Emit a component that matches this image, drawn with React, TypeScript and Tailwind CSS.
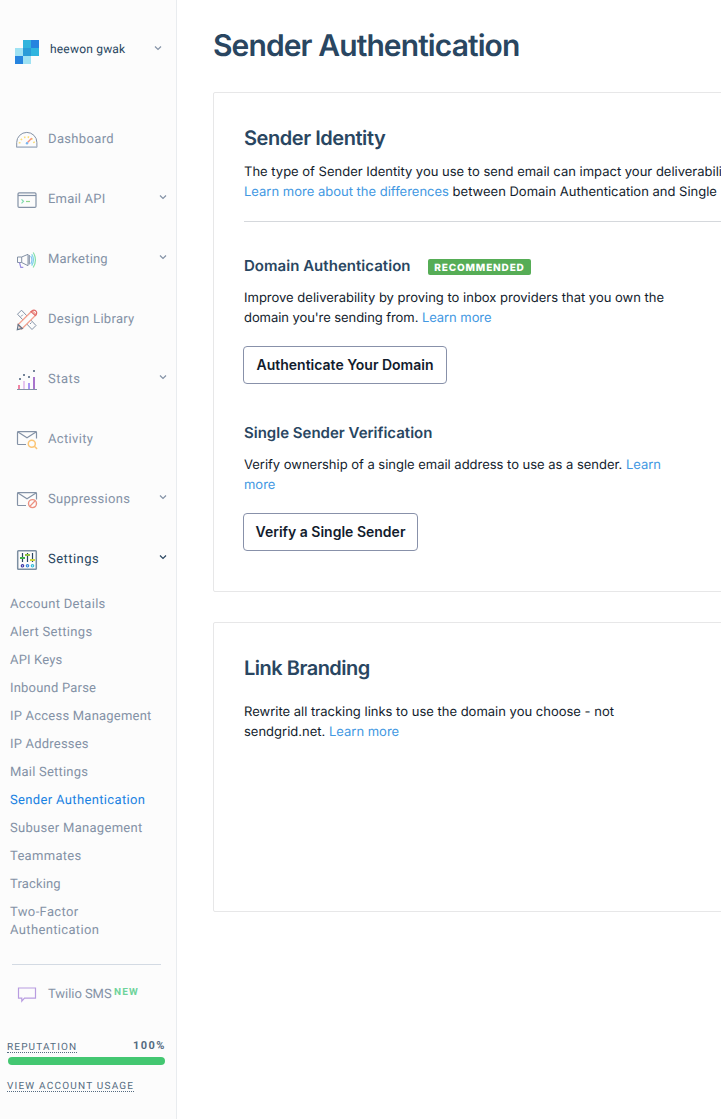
import React from 'react';
import { clsx } from 'clsx';

interface NavItem {
  label: string;
  icon: React.ReactNode;
  spacing: string;
  expandable?: boolean;
  active?: boolean;
}

const INK = '#8492a6';

const Logo = () => (
  <svg width="24" height="24" viewBox="0 0 24 24" shapeRendering="crispEdges">
    <path d="M8 0h8v8H8z" fill="#31b4dd" />
    <path d="M16 0h8v8h-8z" fill="#2684df" />
    <path d="M0 8h8v8H0z" fill="#9fe2f3" />
    <path d="M8 8h8v8H8z" fill="#2a9cd8" />
    <path d="M16 8h8v8h-8z" fill="#30b5df" />
    <path d="M0 16h8v8H0z" fill="#2684df" />
    <path d="M8 16h8v8H8z" fill="#9fe2f3" />
  </svg>
);

const Chevron = ({ className }: { className?: string }) => (
  <svg className={className} width="8" height="6" viewBox="0 0 8 6" fill="none" stroke="currentColor" strokeWidth="1.2">
    <path d="M1 1.5l3 3 3-3" />
  </svg>
);

const Icon = ({ children }: { children: React.ReactNode }) => (
  <svg className="shrink-0" width="22" height="22" viewBox="0 0 22 22" fill="none" stroke={INK} strokeWidth="1">
    {children}
  </svg>
);

const DashboardIcon = () => (
  <Icon>
    <path d="M.7 18.3V13.5a10.1 10.1 0 0 1 20.2 0v4.8z" />
    <path d="M1 18.2h19.8" stroke="#b4bfce" strokeWidth="1.6" />
    <path d="M3.5 14.5a7.4 7.4 0 0 1 14.7 0" stroke="#fbdc78" strokeWidth="1.8" strokeDasharray="1.5 2.3" />
    <path d="M11.5 13.5l4.2-4.2" stroke="#f5917f" strokeWidth="1.4" />
    <circle cx="11" cy="14.2" r="1.2" fill="#7ab5f0" stroke="none" />
  </Icon>
);

const EmailApiIcon = () => (
  <Icon>
    <rect x="2" y="3.8" width="18" height="14.6" rx="1.2" strokeWidth="1.2" />
    <path d="M2 6.5h18" strokeWidth="1.2" />
    <path d="M5.5 10.3l2 2-2 2" stroke="#7fdcae" strokeWidth="1.2" />
    <path d="M10 12.5h4" stroke="#8fd78b" strokeWidth="1.2" />
  </Icon>
);

const MarketingIcon = () => (
  <Icon>
    <path d="M1.5 8h4.2v5.5H1.5z M5.7 8l6.3-2.7v11.4L5.7 13.5" />
    <path d="M13.2 6v9.5" strokeWidth="1.3" />
    <path d="M3.5 13.5l1.3 4.8h2.5" stroke="#9a8fe0" strokeWidth="1.2" />
    <path d="M14.7 7q2.5 4 0 8" stroke="#85bff2" strokeWidth="1.2" />
    <path d="M15.7 5.2q3.6 5.6 0 11.4" stroke="#7fd6e8" strokeWidth="1.2" />
    <path d="M17.2 3.5q4.5 7.5 0 15" stroke="#85dfa8" strokeWidth="1.2" />
  </Icon>
);

const DesignIcon = () => (
  <Icon>
    <path d="M1.5 5.2l4-4L20 16.5l-4 4z" />
    <path d="M5 7.5l1.8-1.8M9 11.8l1.8-1.8M14 15l1.5-1.5" />
    <path d="M2 15.7L16.2 1.7l4 4L5.7 20z" fill="#fcfcfc" stroke="#f4a08e" strokeWidth="1.2" />
    <path d="M15.8 2.2q2-1.8 3.8-.4t.6 3.8l-1 .9-4.2-3.8z" stroke="#e06969" strokeWidth="1.2" />
    <path d="M2.2 15.5L1.3 20.7l5-1.3z" stroke="#66778b" strokeWidth="1.2" />
  </Icon>
);

const StatsIcon = () => (
  <Icon>
    <path d="M1 20.5h20" />
    <path d="M3 16v4" stroke="#f285a5" strokeWidth="2" />
    <path d="M8 12v8" stroke="#e6c6ee" strokeWidth="2" />
    <path d="M13 14v6" stroke="#a996f5" strokeWidth="2" />
    <path d="M18 8v12" stroke="#a874cc" strokeWidth="2" />
    <path d="M3 9h2v2H3zM7 5h2v2H7zM12 7h2v2h-2zM17 1h2v2h-2z" fill="#75859a" stroke="none" />
  </Icon>
);

const Envelope = () => (
  <>
    <path d="M10 15.5H2.3q-.8 0-.8-.8V3.5q0-.8.8-.8h17.4q.8 0 .8.8V9.5" strokeWidth="1.2" />
    <path d="M2 3l9 5.7L20 3" strokeWidth="1.2" />
  </>
);

const ActivityIcon = () => (
  <Icon>
    <Envelope />
    <circle cx="15.8" cy="14.8" r="3.5" stroke="#fbc575" strokeWidth="1.5" />
    <path d="M18.3 17.3l2.8 2.6" stroke="#fbc575" strokeWidth="1.5" />
  </Icon>
);

const SuppressionsIcon = () => (
  <Icon>
    <g transform="translate(0 1)">
      <Envelope />
    </g>
    <circle cx="16.5" cy="14.6" r="4" stroke="#ec9080" strokeWidth="1.4" />
    <path d="M13.8 17.4l5.4-5.6" stroke="#ec9080" strokeWidth="1.3" />
  </Icon>
);

const SettingsIcon = () => (
  <Icon>
    <rect x="1.7" y="1.7" width="18.6" height="18.6" rx=".8" stroke="#7c8fa2" strokeWidth="1.5" />
    <path d="M6.5 4v9M11.5 4v9M16.5 4v9" stroke="#294661" strokeWidth="1.2" />
    <path d="M4 9h5" stroke="#3fae4c" strokeWidth="2" />
    <path d="M9 6h5" stroke="#8fc043" strokeWidth="2" />
    <path d="M14 11h5" stroke="#cdd73f" strokeWidth="2" />
    <circle cx="6.5" cy="16.8" r="1.2" stroke="#4038a8" strokeWidth="1.2" />
    <circle cx="11.5" cy="16.8" r="1.2" stroke="#3487dd" strokeWidth="1.2" />
    <circle cx="16.5" cy="16.8" r="1.2" stroke="#36bedb" strokeWidth="1.2" />
  </Icon>
);

const SmsIcon = () => (
  <Icon>
    <path d="M2.5 5h17v10.2H8.5l-2.7 3v-3H2.5z" stroke="#b89ce0" strokeWidth="1.2" />
  </Icon>
);

const navItems: NavItem[] = [
  { label: 'Dashboard', icon: <DashboardIcon />, spacing: 'tracking-[0.35px]' },
  { label: 'Email API', icon: <EmailApiIcon />, spacing: 'tracking-[0.2px]', expandable: true },
  { label: 'Marketing', icon: <MarketingIcon />, spacing: 'tracking-[0.2px]', expandable: true },
  { label: 'Design Library', icon: <DesignIcon />, spacing: 'tracking-[0.3px]' },
  { label: 'Stats', icon: <StatsIcon />, spacing: 'tracking-[0.5px]', expandable: true },
  { label: 'Activity', icon: <ActivityIcon />, spacing: 'tracking-[0.35px]' },
  { label: 'Suppressions', icon: <SuppressionsIcon />, spacing: 'tracking-[0.3px]', expandable: true },
  { label: 'Settings', icon: <SettingsIcon />, spacing: 'tracking-[0.45px]', expandable: true, active: true },
];

const settingsLinks = [
  { label: 'Account Details', spacing: 'tracking-[0.3px]' },
  { label: 'Alert Settings', spacing: 'tracking-[0.3px]' },
  { label: 'API Keys', spacing: 'tracking-[0.15px]' },
  { label: 'Inbound Parse', spacing: 'tracking-[0.2px]' },
  { label: 'IP Access Management', spacing: 'tracking-[0.22px]' },
  { label: 'IP Addresses', spacing: 'tracking-[0.2px]' },
  { label: 'Mail Settings', spacing: 'tracking-[0.2px]' },
  { label: 'Sender Authentication', spacing: 'tracking-[0.35px]', active: true },
  { label: 'Subuser Management', spacing: 'tracking-[0.3px]' },
  { label: 'Teammates', spacing: 'tracking-[0.3px]' },
  { label: 'Tracking', spacing: 'tracking-[0.15px]' },
  { label: 'Two-Factor Authentication', spacing: 'tracking-[0.35px]' },
];

const Sidebar = () => (
  <aside className="flex h-full w-[177px] shrink-0 flex-col border-r border-[#e9ecef] bg-[#fcfcfc] font-[Roboto,sans-serif] text-[13px] text-[#8492a6]">
    <div className="flex items-start pt-10 pl-[15px]">
      <Logo />
      <span className="ml-[11px] w-[104px] text-[12px] leading-[18px] tracking-[0.2px] whitespace-nowrap text-[#294661]">heewon gwak</span>
      <Chevron className="mt-[5px]" />
    </div>

    <nav className="mt-[45px]">
      {navItems.map((item) => (
        <a key={item.label} href="#" className={clsx('flex h-[60px] items-center pl-4', item.active && 'text-[#294661]')}>
          <span className="mt-[2px]">{item.icon}</span>
          <span className={clsx('ml-[10px] w-[111px] pt-[2px] whitespace-nowrap', item.spacing)}>{item.label}</span>
          {item.expandable && <Chevron className="-mt-[4px]" />}
        </a>
      ))}
    </nav>

    <ul className="mt-[7px] flex flex-col gap-[10px] pl-[10px] leading-[18px]">
      {settingsLinks.map((link) => (
        <li key={link.label} className={clsx('max-w-[145px]', link.spacing, link.active && 'text-[#1a82e2]')}>
          <a href="#">{link.label}</a>
        </li>
      ))}
    </ul>

    <hr className="mt-[24px] ml-3 w-[149px] border-[#d3dae3]" />

    <a href="#" className="mt-[18px] flex h-[22px] items-center pl-4">
      <SmsIcon />
      <span className="ml-[10px] w-[66px] pt-[2px] tracking-[-0.05px] whitespace-nowrap">Twilio SMS</span>
      <span className="mb-[2px] text-[10px] font-bold tracking-[1.1px] text-[#6fd39b]">NEW</span>
    </a>

    <div className="mt-[33px] flex h-[14px] w-[167px] items-start justify-between pl-[7px] text-[10px] leading-[14px] text-[#546b81]">
      <span className="mt-[3px] h-[12px] border-b border-dotted border-[#546b81] tracking-[1.15px]">REPUTATION</span>
      <span className="mt-px w-[34px] text-[11px] font-bold tracking-[1.4px]">100%</span>
    </div>
    <div className="mt-[5px] ml-2 h-2 w-[157px] rounded-full bg-[#43c771]" />
    <a href="#" className="mt-[15px] ml-[7px] h-[12px] self-start border-b border-dotted border-[#546b81] text-[10px] leading-[14px] tracking-[1.2px] text-[#546b81]">
      VIEW ACCOUNT USAGE
    </a>
  </aside>
);

const TextLink = ({ children }: { children: React.ReactNode }) => (
  <a href="#" className="text-[#4298e2]">{children}</a>
);

const OutlineButton = ({ className, children }: { className?: string; children: React.ReactNode }) => (
  <button className={clsx('-ml-px block h-[38px] rounded-[4px] border border-[#8891aa] text-[14px] font-semibold', className)}>
    {children}
  </button>
);

const App: React.FC = () => {
  return (
    <div className="flex h-[1119px] w-[721px] overflow-hidden bg-white font-[Inter,sans-serif] text-[13px] leading-5 text-[#121c2d] [text-rendering:geometricPrecision]">
      <Sidebar />

      <main className="w-[760px] shrink-0 pl-9">
        <h1 className="pt-[26px] text-[30px] leading-[40px] font-semibold tracking-[-0.9px] text-[#294661]">Sender Authentication</h1>

        <section className="mt-[26px] h-[500px] rounded-[2px] border border-[#e7e7e8] px-[30px] pt-[32px]">
          <h2 className="text-[20px] leading-[26px] font-semibold tracking-[-0.45px] text-[#294661]">Sender Identity</h2>
          <p className="mt-[11px] whitespace-nowrap">
            The type of Sender Identity you use to send email can impact your deliverability
            <br />
            <TextLink>Learn more about the differences</TextLink> between Domain Authentication and Single
          </p>
          <hr className="mt-[19px] border-[#d5d8dc]" />

          <div className="mt-[34px] flex h-5 items-center">
            <h3 className="w-[184px] text-[15px] font-semibold tracking-[0.03px] text-[#294661]">Domain Authentication</h3>
            <span className="mt-[2px] flex h-4 w-[103px] items-center justify-center rounded-[2px] bg-[#56ad56] pt-[2px] text-[10px] font-extrabold tracking-[0.85px] text-white">RECOMMENDED</span>
          </div>
          <p className="mt-[12px]">
            Improve deliverability by proving to inbox providers that you own the
            <br />
            <span className="tracking-[-0.07px]">
              domain you're sending from. <TextLink>Learn more</TextLink>
            </span>
          </p>
          <OutlineButton className="mt-[18px] w-[204px]">Authenticate Your Domain</OutlineButton>

          <h3 className="mt-[39px] text-[15px] font-semibold text-[#294661]">Single Sender Verification</h3>
          <p className="mt-[12px] w-[420px] tracking-[-0.02px]">
            Verify ownership of a single email address to use as a sender. <TextLink>Learn<br />more</TextLink>
          </p>
          <OutlineButton className="mt-[18px] w-[175px]">Verify a Single Sender</OutlineButton>
        </section>

        <section className="mt-[30px] h-[290px] rounded-[2px] border border-[#e7e7e8] px-[30px] pt-[32px]">
          <h2 className="text-[20px] leading-[26px] font-semibold tracking-[-0.5px] text-[#294661]">Link Branding</h2>
          <p className="mt-[21px]">
            Rewrite all tracking links to use the domain you choose - not
            <br />
            sendgrid.net. <TextLink>Learn more</TextLink>
          </p>
        </section>
      </main>
    </div>
  );
};

export default App;
